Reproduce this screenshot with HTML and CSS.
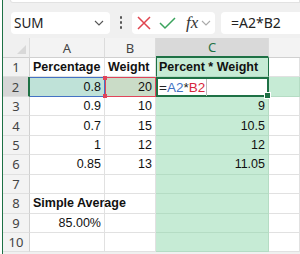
FILE: index.html
```html
<!DOCTYPE html>
<html lang="en">
<head>
  <meta charset="UTF-8">
  <meta name="viewport" content="width=device-width, initial-scale=1">
  <title>Simple Average</title>
  <link rel="stylesheet" href="styles.css">
</head>
<body>

  <div class="app">
    <div class="ribbon-edge"></div>

    <div class="formula-bar">
      <div class="name-box">
        <span>SUM</span>
        <svg class="chev" width="10" height="6" viewBox="0 0 10 6"><path d="M1 1l4 4 4-4" fill="none" stroke="#555" stroke-width="1.1"/></svg>
      </div>
      <div class="grip"><i></i><i></i><i></i></div>
      <div class="fx-box">
        <svg width="16" height="16" viewBox="0 0 16 16"><path d="M2 2l12 12M14 2L2 14" stroke="#e0454f" stroke-width="1.5"/></svg>
        <svg width="17" height="14" viewBox="0 0 17 14"><path d="M1 7l5 5L16 2" fill="none" stroke="#3aa35c" stroke-width="1.5"/></svg>
        <span class="fx">fx</span>
        <svg class="chev" width="10" height="6" viewBox="0 0 10 6"><path d="M1 1l4 4 4-4" fill="none" stroke="#aaa" stroke-width="1.1"/></svg>
      </div>
      <div class="formula-input">=A2*B2</div>
    </div>

    <div class="sheet">
      <div class="corner"><span></span></div>
      <div class="col-head">A</div>
      <div class="col-head">B</div>
      <div class="col-head active">C</div>
      <div class="col-head last"></div>

      <div class="row-head">1</div>
      <div class="cell bold">Percentage</div>
      <div class="cell bold">Weight</div>
      <div class="cell bold focus c1">Percent * Weight</div>
      <div class="cell"></div>

      <div class="row-head active">2</div>
      <div class="cell num focus ref-a">0.8</div>
      <div class="cell num focus ref-b">20</div>
      <div class="cell editing"><span class="op">=</span><span class="blue">A2</span><span class="op">*</span><span class="red">B2</span><span class="caret"></span></div>
      <div class="cell focus-row"></div>

      <div class="row-head">3</div>
      <div class="cell num">0.9</div>
      <div class="cell num">10</div>
      <div class="cell num focus">9</div>
      <div class="cell"></div>

      <div class="row-head">4</div>
      <div class="cell num">0.7</div>
      <div class="cell num">15</div>
      <div class="cell num focus">10.5</div>
      <div class="cell"></div>

      <div class="row-head">5</div>
      <div class="cell num">1</div>
      <div class="cell num">12</div>
      <div class="cell num focus">12</div>
      <div class="cell"></div>

      <div class="row-head">6</div>
      <div class="cell num">0.85</div>
      <div class="cell num">13</div>
      <div class="cell num focus">11.05</div>
      <div class="cell"></div>

      <div class="row-head">7</div>
      <div class="cell"></div>
      <div class="cell"></div>
      <div class="cell focus"></div>
      <div class="cell"></div>

      <div class="row-head">8</div>
      <div class="cell bold overflow">Simple Average</div>
      <div class="cell"></div>
      <div class="cell focus"></div>
      <div class="cell"></div>

      <div class="row-head">9</div>
      <div class="cell num">85.00%</div>
      <div class="cell"></div>
      <div class="cell focus"></div>
      <div class="cell"></div>

      <div class="row-head">10</div>
      <div class="cell"></div>
      <div class="cell"></div>
      <div class="cell focus"></div>
      <div class="cell"></div>
    </div>
  </div>

</body>
</html>
```

FILE: styles.css
```css
* {
  box-sizing: border-box;
}
body {
  margin: 0;
  padding-left: 2px;
  background: #fff;
  font-family: 'Liberation Sans', Arial, sans-serif;
  overflow: hidden;
}
.app {
  border-left: 1px solid #1e7145;
  height: 254px;
  background: #f0f0f0;
}
.ribbon-edge {
  height: 3px;
  margin-left: 7px;
  background: #fff;
  border: 1px solid #e2e2e2;
  border-top: none;
  border-radius: 0 0 0 5px;
}
.formula-bar {
  display: flex;
  align-items: center;
  height: 35px;
  padding: 7px 0 3px 8px;
}
.name-box,
.fx-box,
.formula-input {
  height: 22px;
  background: #fff;
  border-radius: 4px;
  display: flex;
  align-items: center;
}
.name-box {
  width: 99px;
  padding: 0 6px 0 3px;
  justify-content: space-between;
  font-family: 'Noto Sans', sans-serif;
  font-size: 13.5px;
  color: #222;
}
.grip {
  width: 22px;
  display: flex;
  flex-direction: column;
  align-items: center;
  gap: 2px;
}
.grip i {
  width: 2px;
  height: 3px;
  background: #555;
  border-radius: 1px;
}
.fx-box {
  width: 83px;
  padding: 0 2px 0 4px;
  gap: 7px;
}
.fx {
  font-family: 'Liberation Serif', serif;
  font-style: italic;
  font-size: 17px;
  color: #333;
  margin-left: 3px;
  margin-right: -4px;
}
.formula-input {
  flex: 1;
  margin-left: 6px;
  padding-left: 10px;
  font-family: 'Noto Sans', sans-serif;
  font-size: 14px;
  color: #222;
  border-radius: 4px 0 0 4px;
}

.sheet {
  display: grid;
  grid-template-columns: 27px 75px 51px 113px 1fr;
  grid-template-rows: 20px repeat(10, 19.45px);
  background: #fff;
  font-size: 12.5px;
}
.corner {
  background: #f0f0f0;
  border-right: 1px solid #dcdcdc;
  border-bottom: 1px solid #d0d0d0;
  position: relative;
}
.corner span {
  position: absolute;
  right: 3px;
  bottom: 3px;
  border-style: solid;
  border-width: 0 0 9px 9px;
  border-color: transparent transparent #d8d8d8 transparent;
}
.col-head {
  background: #f3f3f3;
  border-right: 1px solid #dcdcdc;
  border-bottom: 1px solid #d0d0d0;
  display: flex;
  align-items: center;
  justify-content: center;
  font-family: 'Noto Sans', sans-serif;
  font-size: 13px;
  color: #444;
}
.col-head.active {
  background: #d9d9d9;
  color: #1e7145;
  border-bottom: 2px solid #1e7145;
}
.col-head.last {
  border-right: none;
}
.row-head {
  background: #f3f3f3;
  border-right: 1px solid #d0d0d0;
  border-bottom: 1px solid #e0e0e0;
  display: flex;
  align-items: center;
  justify-content: center;
  font-family: 'Noto Sans', sans-serif;
  font-size: 13px;
  color: #444;
}
.row-head.active {
  background: #d6d6d6;
  border-right: 2px solid #1e7145;
}
.cell {
  border-right: 1px solid #e1e1e1;
  border-bottom: 1px solid #e1e1e1;
  padding: 0 3px;
  display: flex;
  align-items: center;
  color: #111;
  white-space: nowrap;
}
.num {
  justify-content: flex-end;
}
.bold {
  font-weight: bold;
}
.overflow {
  overflow: visible;
  position: relative;
  z-index: 1;
}
.focus,
.focus-row {
  background: #c6ebd5;
  border-color: #b5dcc4;
}
.c1 {
  border-left: 1px solid #1e7145;
  border-right: 1px solid #1e7145;
  padding-left: 2px;
}
.ref-a {
  background: #bfe2d8;
  border: 1px solid #4472c4;
  border-left: none;
  position: relative;
}
.ref-b {
  background: #cadcc7;
  border: 1px solid #e0455a;
  position: relative;
}
.ref-b::before,
.ref-b::after {
  content: '';
  position: absolute;
  left: -3px;
  width: 4px;
  height: 4px;
  background: #e0455a;
}
.ref-b::before {
  top: -2px;
}
.ref-b::after {
  bottom: -2px;
}
.editing {
  background: #fff;
  border: 2px solid #1e7145;
  padding-left: 1px;
  font-size: 13.5px;
  position: relative;
}
.editing::after {
  content: '';
  position: absolute;
  right: -4px;
  bottom: -4px;
  width: 5px;
  height: 5px;
  background: #1e7145;
  border: 1px solid #fff;
}
.op {
  color: #222;
}
.blue {
  color: #4472c4;
}
.red {
  color: #d7263d;
}
.caret {
  width: 1px;
  height: 17px;
  background: #bbb;
  margin-left: 1px;
}
```
